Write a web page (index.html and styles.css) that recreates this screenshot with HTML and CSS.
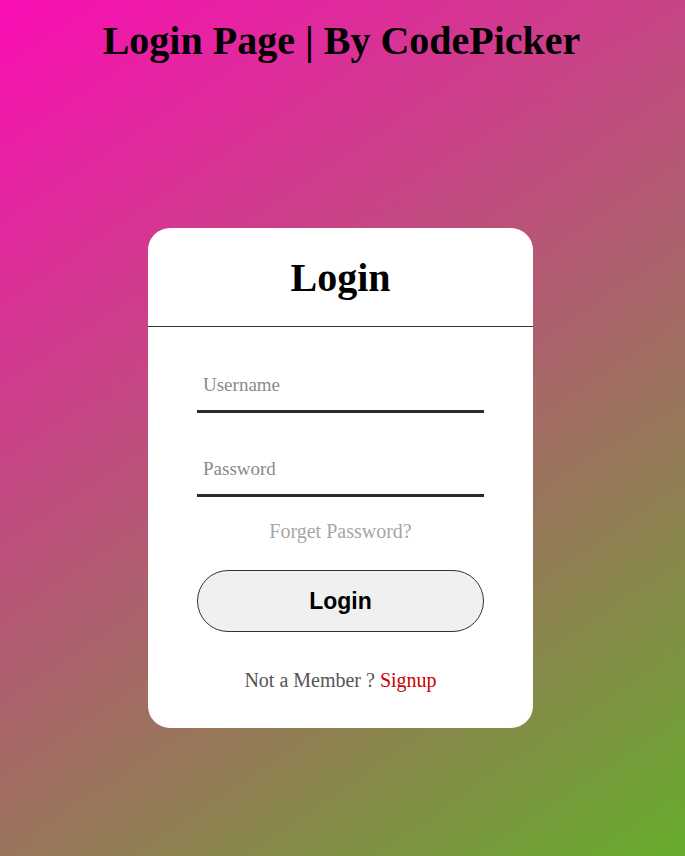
FILE: index.html
```html
<!DOCTYPE html>
<html lang="en">
<head>
  <meta charset="UTF-8" />
  <meta name="viewport" content="width=device-width, initial-scale=1.0"/>
  <title>Login Page | By CodePicker</title>
  <link rel="stylesheet" href="styles.css">
</head>
<body>
  <h1 class="page-title">Login Page | By CodePicker</h1>
  <div class="center">
    <div class="card">
      <h2 class="card-title">Login</h2>
      <form class="form">
        <div class="field">
          <input type="text" placeholder="Username">
        </div>
        <div class="field">
          <input type="password" placeholder="Password">
        </div>
        <div class="forget">Forget Password?</div>
        <button type="button" class="btn">Login</button>
        <div class="signup">Not a Member ? <a href="#">Signup</a></div>
      </form>
    </div>
  </div>
</body>
</html>
```

FILE: styles.css
```css
* {
  box-sizing: border-box;
}
body {
  margin: 0;
  min-height: 100vh;
  font-family: "Liberation Serif", "Times New Roman", serif;
  background: linear-gradient(146deg, #fb0db5 0%, #66ac2c 100%);
}
.page-title {
  margin: 0;
  padding: 17px 2px 0 0;
  text-align: center;
  font-size: 40px;
  line-height: 48px;
}
.center {
  display: flex;
  justify-content: center;
  padding: 163px 4px 0 0;
}
.card {
  width: 385px;
  height: 500px;
  background: #fff;
  border-radius: 22px;
}
.card-title {
  margin: 0;
  height: 99px;
  padding-top: 28px;
  text-align: center;
  font-size: 40px;
  line-height: 44px;
  border-bottom: 1px solid #333;
}
.form {
  padding: 0 49px;
}
.field {
  margin-top: 39px;
  border-bottom: 3px solid #2b2b2b;
}
.field + .field {
  margin-top: 37px;
}
.field input {
  width: 100%;
  height: 44px;
  border: none;
  outline: none;
  background: none;
  padding: 0 6px 6px;
  font-family: "Liberation Serif", serif;
  font-size: 19px;
}
.field input::placeholder {
  color: #8a8a8a;
}
.forget {
  margin-top: 23px;
  text-align: center;
  color: #a6a6a6;
  font-size: 20px;
}
.btn {
  display: block;
  width: 287px;
  height: 62px;
  margin-top: 27px;
  border: 1px solid #333;
  border-radius: 31px;
  background: #f0f0f0;
  font-family: "Liberation Sans", Arial, sans-serif;
  font-size: 23px;
  font-weight: bold;
  color: #000;
}
.signup {
  margin-top: 37px;
  text-align: center;
  color: #555;
  font-size: 20px;
}
.signup a {
  color: #c00;
  text-decoration: none;
}
```
